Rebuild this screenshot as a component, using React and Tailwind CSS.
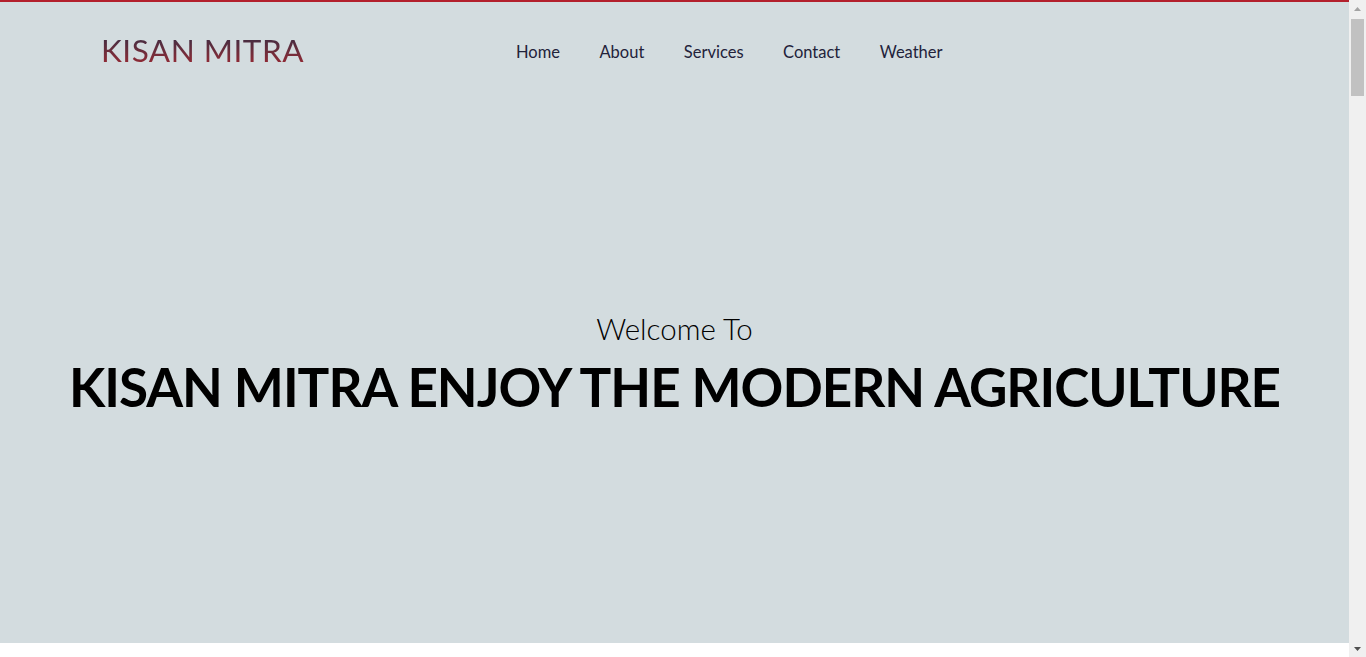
import React from "react";

const links = ["Home", "About", "Services", "Contact", "Weather"];

const App = () => {
    return (
        <div className="font-['Lato',sans-serif] bg-white flex h-[657px] overflow-hidden">
            <div className="flex-1">
                {/* Hero */}
                <section className="h-[643px] bg-[#d3dcdf] border-t-2 border-[#b3202c] flex flex-col">
                    {/* Navbar */}
                    <header className="h-[100px] flex items-center pl-[101px]">
                        <div className="w-[415px] pt-[2px]">
                            <h1 className="text-[31.5px] leading-none tracking-[0.5px] font-normal bg-gradient-to-b from-[#3a2a42] to-[#aa1f2b] bg-clip-text text-transparent inline-block pb-1">
                                KISAN MITRA
                            </h1>
                        </div>
                        <nav>
                            <ul className="flex gap-[39.5px] text-[16.5px] text-[#22223a]">
                                {links.map((link) => (
                                    <li key={link}>
                                        <a href="#" className="hover:text-[#aa1f2b]">
                                            {link}
                                        </a>
                                    </li>
                                ))}
                            </ul>
                        </nav>
                    </header>

                    {/* Welcome text */}
                    <div className="flex flex-col items-center pt-[212px] text-black">
                        <p className="text-[29.5px] font-light leading-none">Welcome To</p>
                        <h2 className="mt-[16px] text-[53px] font-bold leading-none tracking-[-1px] uppercase">
                            Kisan Mitra Enjoy the Modern Agriculture
                        </h2>
                    </div>
                </section>
            </div>

            {/* scrollbar */}
            <div className="w-[17px] bg-[#f0f0f0] flex flex-col items-center">
                <div className="h-[17px] flex items-center justify-center">
                    <svg width="7" height="4" viewBox="0 0 7 4">
                        <path d="M0 4 L3.5 0 L7 4 Z" fill="#a3a3a3" />
                    </svg>
                </div>
                <div className="w-[13px] h-[77px] mt-[2px] bg-[#c1c1c1]"></div>
                <div className="flex-1"></div>
                <div className="h-[17px] flex items-center justify-center">
                    <svg width="7" height="4" viewBox="0 0 7 4">
                        <path d="M0 0 L7 0 L3.5 4 Z" fill="#505050" />
                    </svg>
                </div>
            </div>
        </div>
    );
};

export default App;
